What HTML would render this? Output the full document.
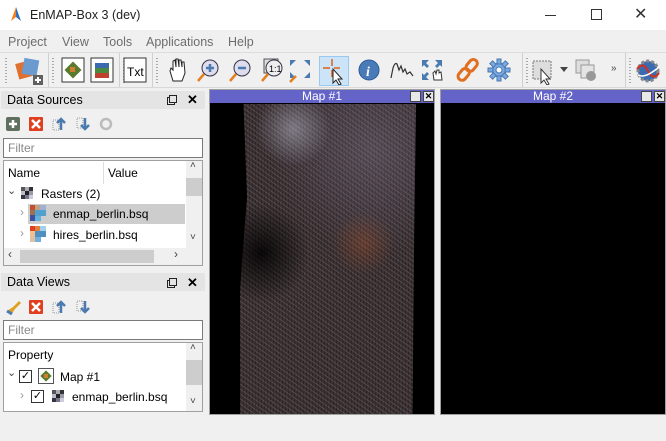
<!DOCTYPE html>
<html><head><meta charset="utf-8"><style>
*{margin:0;padding:0;box-sizing:border-box}
body{width:666px;height:441px;overflow:hidden;background:#f0f0f0;font-family:"Liberation Sans",sans-serif;font-size:12px;color:#000;position:relative}
.a{position:absolute}
.title{left:0;top:0;width:666px;height:30px;background:#fff}
.menu span{position:absolute;top:35px;color:#6d6d6d;font-size:12.5px}
.tb{top:52px;left:0;width:666px;height:36px;background:#f0f0f0;border-top:1px solid #dcdcdc;border-bottom:1px solid #d8d8d8}
.grip{width:2px;height:26px;top:58px;background:repeating-linear-gradient(#aaa 0 1px,transparent 1px 3px)}
.sep{width:1px;height:34px;top:53px;background:#d0d0d0}
.ph{height:18px;background:#e4e4e4;font-size:12.5px;padding-left:6px;line-height:18px}
.box{background:#fff;border:1px solid #a0a0a0}
.filter{height:20px;background:#fff;border:1px solid #7a7a7a;color:#888;padding-left:4px;line-height:18px}
.mh{background:#6464c8;color:#fff;text-align:center;font-size:12px;line-height:13px;height:14px}
.btn{width:11px;height:11px;background:#e8e8e8;border:1px solid #444;top:1px}
</style></head><body>
<div class="a title"></div>
<svg class="a" style="left:9px;top:6px" width="14" height="18"><path d="M7 1 L2 15 L7 11Z" fill="#f08020"/><path d="M7 1 L12 15 L7 11Z" fill="#3070c0"/></svg>
<div class="a" style="left:30px;top:8px;font-size:12.5px;color:#222">EnMAP-Box 3 (dev)</div>
<div class="a" style="left:545px;top:15px;width:11px;height:1px;background:#333"></div>
<div class="a" style="left:591px;top:9px;width:11px;height:11px;border:1px solid #333"></div>
<div class="a" style="left:634px;top:4px;font-size:16px;color:#333">✕</div>
<div class="menu"><span style="left:8px">Project</span><span style="left:62px">View</span><span style="left:103px">Tools</span><span style="left:146px">Applications</span><span style="left:228px">Help</span></div>
<div class="a tb"></div>
<div class="a grip" style="left:5px"></div><div class="a sep" style="left:48px"></div>
<div class="a grip" style="left:52px"></div><div class="a sep" style="left:119px"></div>
<div class="a grip" style="left:123px"></div><div class="a sep" style="left:152px"></div>
<div class="a grip" style="left:156px"></div><div class="a sep" style="left:522px"></div>
<div class="a grip" style="left:526px"></div><div class="a sep" style="left:625px"></div>
<div class="a grip" style="left:629px"></div>
<svg class="a" style="left:14px;top:56px" width="30" height="30"><rect x="3" y="6" width="14" height="16" fill="#e07030" transform="rotate(-15 10 14)"/><rect x="9" y="3" width="15" height="16" fill="#6a9ad0" transform="rotate(10 16 11)"/><rect x="19" y="19" width="10" height="10" fill="#606060"/><path d="M24 21v6M21 24h6" stroke="#fff" stroke-width="2"/></svg>
<svg class="a" style="left:61px;top:57px" width="24" height="26"><rect x="1" y="1" width="22" height="24" fill="#fff" stroke="#333"/><rect x="6" y="7" width="12" height="12" fill="#5a7a30" transform="rotate(45 12 13)"/><rect x="9" y="10" width="5" height="5" fill="#d08030"/></svg>
<svg class="a" style="left:90px;top:57px" width="24" height="26"><rect x="1" y="1" width="22" height="24" fill="#fff" stroke="#333"/><rect x="5" y="6" width="14" height="5" fill="#3a6ab0"/><rect x="5" y="11" width="14" height="5" fill="#4a8a40"/><rect x="5" y="16" width="14" height="5" fill="#c04030"/></svg>
<svg class="a" style="left:120px;top:57px" width="28" height="26"><rect x="4" y="1" width="22" height="24" fill="#fff" stroke="#333"/><text x="7" y="19" font-size="12" font-family="Liberation Sans">Txt</text></svg>
<svg class="a" style="left:167px;top:57px" width="22" height="26"><path d="M6 24 L3 14 L4 11 L6 13 L6 4 L8 3 L9 10 L9 2 L11 2 L12 10 L12 3 L14 3 L15 10 L15 5 L17 5 L18 16 L15 24Z" fill="#fff" stroke="#222"/></svg>
<svg class="a" style="left:196px;top:57px" width="130" height="28"><g fill="none"><circle cx="14" cy="11" r="8" fill="#dde" stroke="#334"/><path d="M14 7v8M10 11h8" stroke="#4a7ab0" stroke-width="2.5"/><path d="M8 17l-6 7" stroke="#e08020" stroke-width="2.5"/>
<circle cx="46" cy="11" r="8" fill="#dde" stroke="#334"/><path d="M42 11h8" stroke="#4a7ab0" stroke-width="2.5"/><path d="M40 17l-6 7" stroke="#e08020" stroke-width="2.5"/>
<rect x="68" y="2" width="14" height="14" fill="#ddd" stroke="#555"/><circle cx="78" cy="11" r="8" fill="#eee" stroke="#334"/><path d="M72 17l-6 7" stroke="#e08020" stroke-width="2.5"/>
<path d="M94 3h6l-6 6zM114 3h-6l6 6zM94 21h6l-6-6zM114 21h-6l6-6z" fill="#4a7ab0"/><path d="M100 19l-6 6" stroke="#e08020" stroke-width="2.5"/></g><text x="73" y="15" font-size="9" font-family="Liberation Sans">1:1</text></svg>
<div class="a" style="left:319px;top:56px;width:30px;height:30px;background:#cce4f7;border:1px solid #99c9ef"></div>
<svg class="a" style="left:320px;top:57px" width="28" height="28"><path d="M12 2v7M12 13v7M3 11h7M14 11h6" stroke="#e06020" stroke-width="1.5"/><path d="M13 12 L13 26 L16 23 L19 28 L21 27 L18 22 L22 22Z" fill="#fff" stroke="#222"/></svg>
<svg class="a" style="left:357px;top:58px" width="24" height="24"><circle cx="12" cy="12" r="10" fill="#4a7ab8" stroke="#2a5a98"/><text x="9" y="18" font-size="14" font-weight="bold" font-style="italic" fill="#fff" font-family="Liberation Serif">i</text></svg>
<svg class="a" style="left:390px;top:60px" width="24" height="20"><path d="M1 18 L3 8 Q5 2 7 4 L9 10 L11 6 L13 12 L15 9 L17 14 L20 12 L23 16" fill="none" stroke="#333" stroke-width="1.2"/></svg>
<svg class="a" style="left:420px;top:58px" width="24" height="24"><path d="M2 2h7l-3 3 3 3-2 2-3-3-2 2zM22 2h-7l3 3-3 3 2 2 3-3 2 2zM2 22h7l-3-3 3-3-2-2-3 3-2-2z" fill="#4a7ab0"/><path d="M14 22 L13 15 L15 13 L16 16 L17 12 L19 12 L19 15 L21 14 L22 22Z" fill="#fff" stroke="#333"/></svg>
<svg class="a" style="left:455px;top:57px" width="26" height="26"><g fill="none" stroke="#e07020" stroke-width="3"><rect x="13" y="2" width="8" height="13" rx="4" transform="rotate(40 17 8)"/><rect x="5" y="11" width="8" height="13" rx="4" transform="rotate(40 9 17)"/></g></svg>
<svg class="a" style="left:487px;top:58px" width="24" height="24"><g transform="translate(12 12)" fill="#7aa8e0" stroke="#4a78b0"><circle r="7"/><g><rect x="-2" y="-11" width="4" height="5"/><rect x="-2" y="6" width="4" height="5"/><rect x="-11" y="-2" width="5" height="4"/><rect x="6" y="-2" width="5" height="4"/><rect x="-2" y="-11" width="4" height="5" transform="rotate(45)"/><rect x="-2" y="6" width="4" height="5" transform="rotate(45)"/><rect x="-2" y="-11" width="4" height="5" transform="rotate(-45)"/><rect x="-2" y="6" width="4" height="5" transform="rotate(-45)"/></g><circle r="3" fill="#fff"/></g></svg>
<svg class="a" style="left:531px;top:59px" width="26" height="26"><rect x="2" y="2" width="18" height="18" fill="#ddd" stroke="#777" stroke-dasharray="2 1"/><path d="M10 10 L10 24 L13 21 L16 26 L18 25 L15 20 L19 20Z" fill="#fff" stroke="#333"/></svg>
<svg class="a" style="left:560px;top:67px" width="8" height="5"><path d="M0 0h8l-4 5z" fill="#444"/></svg>
<svg class="a" style="left:575px;top:59px" width="24" height="24"><rect x="1" y="1" width="13" height="13" fill="#ddd" stroke="#999"/><rect x="6" y="6" width="13" height="13" fill="#e4e4e4" stroke="#999"/><circle cx="16" cy="17" r="5" fill="#999"/></svg>
<div class="a" style="left:611px;top:63px;font-size:10px;color:#444">»</div>
<svg class="a" style="left:635px;top:57px" width="26" height="28"><circle cx="13" cy="14" r="10" fill="#3a6ab0" stroke="#888" stroke-width="3" stroke-dasharray="3 2"/><path d="M2 12 Q8 4 13 14 T24 16" stroke="#d03020" stroke-width="2" fill="none"/><path d="M3 18 Q10 22 24 10" stroke="#fff" stroke-width="1.5" fill="none"/></svg>

<div class="a ph" style="left:1px;top:91px;width:204px">Data Sources</div>
<svg class="a" style="left:167px;top:95px" width="10" height="10"><rect x="0.5" y="2.5" width="7" height="7" fill="none" stroke="#222"/><rect x="2.5" y="0.5" width="7" height="7" fill="#e4e4e4" stroke="#222"/></svg>
<div class="a" style="left:187px;top:92px;font-size:13px;font-weight:bold">✕</div>
<svg class="a" style="left:5px;top:116px" width="110" height="18"><rect x="1" y="1" width="14" height="14" rx="2" fill="#607060"/><path d="M8 4v8M4 8h8" stroke="#fff" stroke-width="2.5"/><rect x="24" y="1" width="14" height="14" rx="1" fill="#e04020"/><path d="M27 4l8 8M35 4l-8 8" stroke="#fff" stroke-width="2.5"/><rect x="48" y="4" width="6" height="10" fill="none" stroke="#999" stroke-dasharray="1 1"/><path d="M56 14V4M52 7l4-4 4 4" stroke="#4a7ab0" stroke-width="2.5" fill="none"/><rect x="72" y="2" width="6" height="10" fill="none" stroke="#999" stroke-dasharray="1 1"/><path d="M80 2v10M76 9l4 4 4-4" stroke="#4a7ab0" stroke-width="2.5" fill="none"/><circle cx="101" cy="8" r="5" fill="none" stroke="#bbb" stroke-width="2.5"/></svg>
<div class="a filter" style="left:3px;top:138px;width:200px">Filter</div>
<div class="a box" style="left:3px;top:160px;width:200px;height:106px"></div>
<div class="a" style="left:103px;top:162px;width:1px;height:22px;background:#ddd"></div>
<div class="a" style="left:8px;top:166px">Name</div><div class="a" style="left:108px;top:166px">Value</div>
<div class="a" style="left:186px;top:161px;width:16px;height:87px;background:#f0f0f0"></div>
<div class="a" style="left:186px;top:178px;width:16px;height:18px;background:#cdcdcd"></div>
<div class="a" style="left:190px;top:160px;font-size:10px;color:#444">˄</div><div class="a" style="left:190px;top:232px;font-size:10px;color:#444">˅</div>
<div class="a" style="left:4px;top:248px;width:198px;height:17px;background:#f0f0f0"></div>
<div class="a" style="left:20px;top:250px;width:134px;height:13px;background:#cdcdcd"></div>
<div class="a" style="left:8px;top:247px;color:#444">‹</div><div class="a" style="left:174px;top:247px;color:#444">›</div>
<div class="a" style="left:7px;top:184px;color:#444;font-size:11px">⌄</div>
<svg class="a" style="left:21px;top:187px" width="12" height="12"><rect x="0" y="0" width="4" height="4" fill="#555"/><rect x="4" y="0" width="4" height="4" fill="#aab"/><rect x="8" y="0" width="4" height="4" fill="#333"/><rect x="0" y="4" width="4" height="4" fill="#bbc"/><rect x="4" y="4" width="4" height="4" fill="#222"/><rect x="8" y="4" width="4" height="4" fill="#99a"/><rect x="0" y="8" width="4" height="4" fill="#334"/><rect x="4" y="8" width="4" height="4" fill="#778"/><rect x="8" y="8" width="4" height="4" fill="#ccd"/></svg>
<div class="a" style="left:41px;top:187px">Rasters (2)</div>
<div class="a" style="left:28px;top:204px;width:157px;height:20px;background:#cdcdcd"></div>
<div class="a" style="left:20px;top:205px;color:#999">›</div><div class="a" style="left:20px;top:226px;color:#999">›</div>
<svg class="a" style="left:30px;top:205px" width="16" height="16"><rect width="5" height="5" fill="#c05030"/><rect x="5" width="5" height="5" fill="#c0a080"/><rect x="10" width="6" height="5" fill="#a0b0d0"/><rect y="5" width="5" height="5" fill="#a07050"/><rect x="5" y="5" width="11" height="6" fill="#50a0d0"/><rect y="10" width="5" height="6" fill="#4050a0"/><rect x="5" y="11" width="6" height="5" fill="#60b0e0"/></svg>
<svg class="a" style="left:30px;top:226px" width="16" height="16"><rect width="5" height="5" fill="#e04020"/><rect x="5" width="5" height="5" fill="#e08040"/><rect x="10" width="6" height="5" fill="#a0d0f0"/><rect y="5" width="5" height="5" fill="#f0c090"/><rect x="5" y="5" width="11" height="6" fill="#5090c0"/><rect y="10" width="5" height="6" fill="#e0c0a0"/><rect x="5" y="11" width="6" height="5" fill="#70b0e0"/></svg>
<div class="a" style="left:53px;top:207px">enmap_berlin.bsq</div>
<div class="a" style="left:53px;top:228px">hires_berlin.bsq</div>

<div class="a ph" style="left:1px;top:273px;width:204px">Data Views</div>
<svg class="a" style="left:167px;top:278px" width="10" height="10"><rect x="0.5" y="2.5" width="7" height="7" fill="none" stroke="#222"/><rect x="2.5" y="0.5" width="7" height="7" fill="#e4e4e4" stroke="#222"/></svg>
<div class="a" style="left:187px;top:275px;font-size:13px;font-weight:bold">✕</div>
<svg class="a" style="left:5px;top:299px" width="90" height="18"><path d="M2 12l6-4 6-6 2 2-6 6-4 6z" fill="#e0a020"/><path d="M2 12l5 3" stroke="#4a7ab0" stroke-width="3"/><rect x="24" y="1" width="14" height="14" rx="1" fill="#e04020"/><path d="M27 4l8 8M35 4l-8 8" stroke="#fff" stroke-width="2.5"/><rect x="48" y="4" width="6" height="10" fill="none" stroke="#999" stroke-dasharray="1 1"/><path d="M56 14V4M52 7l4-4 4 4" stroke="#4a7ab0" stroke-width="2.5" fill="none"/><rect x="72" y="2" width="6" height="10" fill="none" stroke="#999" stroke-dasharray="1 1"/><path d="M80 2v10M76 9l4 4 4-4" stroke="#4a7ab0" stroke-width="2.5" fill="none"/></svg>
<div class="a filter" style="left:3px;top:320px;width:200px">Filter</div>
<div class="a box" style="left:3px;top:342px;width:200px;height:70px"></div>
<div class="a" style="left:186px;top:343px;width:16px;height:68px;background:#f0f0f0"></div>
<div class="a" style="left:186px;top:360px;width:16px;height:25px;background:#cdcdcd"></div>
<div class="a" style="left:190px;top:342px;font-size:10px;color:#444">˄</div><div class="a" style="left:190px;top:396px;font-size:10px;color:#444">˅</div>
<div class="a" style="left:8px;top:348px">Property</div>
<div class="a" style="left:7px;top:366px;color:#444;font-size:11px">⌄</div>
<div class="a" style="left:19px;top:370px;width:13px;height:13px;border:1px solid #333;background:#fff;font-size:11px;line-height:11px;text-align:center">✓</div>
<svg class="a" style="left:38px;top:368px" width="16" height="16"><rect x="0.5" y="0.5" width="15" height="15" fill="#fff" stroke="#555"/><rect x="4" y="4" width="8" height="8" fill="#5a7a30" transform="rotate(45 8 8)"/><rect x="6" y="6" width="4" height="4" fill="#d08030"/></svg>
<div class="a" style="left:60px;top:370px">Map #1</div>
<div class="a" style="left:20px;top:388px;color:#999">›</div>
<div class="a" style="left:31px;top:390px;width:13px;height:13px;border:1px solid #333;background:#fff;font-size:11px;line-height:11px;text-align:center">✓</div>
<svg class="a" style="left:52px;top:390px" width="12" height="12"><rect x="0" y="0" width="4" height="4" fill="#555"/><rect x="4" y="0" width="4" height="4" fill="#aab"/><rect x="8" y="0" width="4" height="4" fill="#333"/><rect x="0" y="4" width="4" height="4" fill="#bbc"/><rect x="4" y="4" width="4" height="4" fill="#222"/><rect x="8" y="4" width="4" height="4" fill="#99a"/><rect x="0" y="8" width="4" height="4" fill="#334"/><rect x="4" y="8" width="4" height="4" fill="#778"/><rect x="8" y="8" width="4" height="4" fill="#ccd"/></svg>
<div class="a" style="left:72px;top:390px">enmap_berlin.bsq</div>

<div class="a" style="left:209px;top:89px;width:226px;height:326px;border:1px solid #a0a0a0;background:#000"></div>
<div class="a mh" style="left:210px;top:90px;width:224px;height:13px">Map #1</div>
<div class="a btn" style="left:410px;top:91px"></div><div class="a btn" style="left:423px;top:91px;font-size:9px;line-height:9px;text-align:center;font-weight:bold">✕</div>
<div class="a" style="left:240px;top:104px;width:176px;height:310px;clip-path:polygon(2% 0,100% 0,99% 40%,98% 100%,0 100%,0 60%,4% 30%);background:
radial-gradient(circle at 30% 8%,rgba(200,200,220,.45),transparent 12%),
radial-gradient(ellipse at 12% 48%,rgba(0,0,0,.85),transparent 22%),
radial-gradient(circle at 70% 45%,rgba(170,80,40,.35),transparent 15%),
radial-gradient(circle at 75% 15%,rgba(150,140,170,.3),transparent 35%),
repeating-linear-gradient(35deg,rgba(150,140,160,.28) 0 1px,transparent 1px 4px),
repeating-linear-gradient(-55deg,rgba(100,60,40,.3) 0 1px,transparent 1px 3px),
repeating-linear-gradient(90deg,rgba(0,0,0,.25) 0 1px,transparent 1px 3px),
#352f32"></div>
<div class="a" style="left:440px;top:89px;width:226px;height:326px;border:1px solid #a0a0a0;background:#000"></div>
<div class="a mh" style="left:441px;top:90px;width:224px;height:13px">Map #2</div>
<div class="a btn" style="left:641px;top:91px"></div><div class="a btn" style="left:654px;top:91px;font-size:9px;line-height:9px;text-align:center;font-weight:bold">✕</div>
</body></html>
